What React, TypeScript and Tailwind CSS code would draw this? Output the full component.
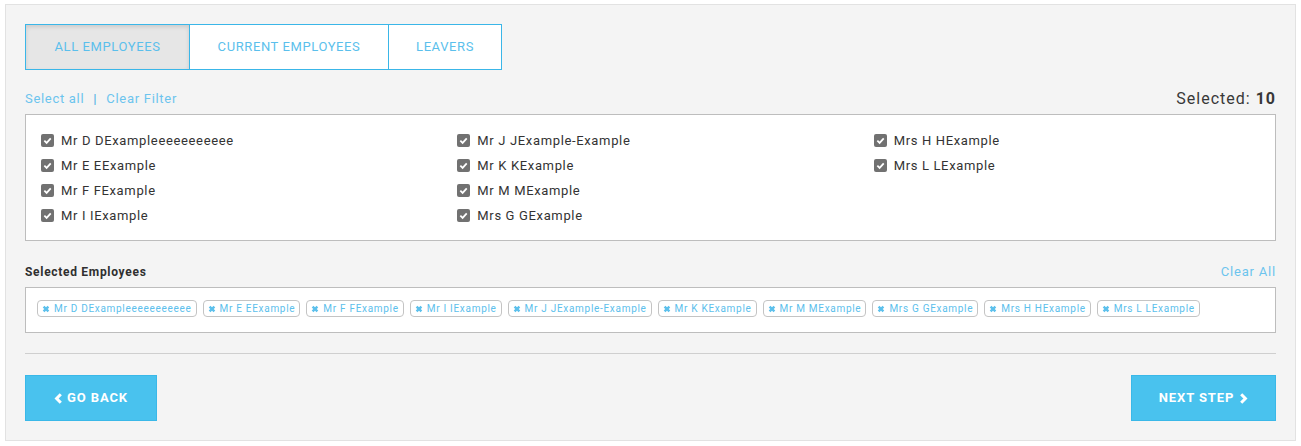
import React from 'react';

const employees = [
  ['Mr D DExampleeeeeeeeeee', 'Mr E EExample', 'Mr F FExample', 'Mr I IExample'],
  ['Mr J JExample-Example', 'Mr K KExample', 'Mr M MExample', 'Mrs G GExample'],
  ['Mrs H HExample', 'Mrs L LExample'],
];

const selected = [
  'Mr D DExampleeeeeeeeeee',
  'Mr E EExample',
  'Mr F FExample',
  'Mr I IExample',
  'Mr J JExample-Example',
  'Mr K KExample',
  'Mr M MExample',
  'Mrs G GExample',
  'Mrs H HExample',
  'Mrs L LExample',
];

function CheckBox() {
  return (
    <span className="w-[13px] h-[13px] rounded-[2px] bg-[#717171] flex items-center justify-center shrink-0">
      <svg width="9" height="9" viewBox="0 0 10 10">
        <path d="M1.5 5.2 L4 7.6 L8.6 2.6" stroke="white" strokeWidth="2" fill="none" />
      </svg>
    </span>
  );
}

function XIcon() {
  return (
    <svg width="8" height="8" viewBox="0 0 10 10" className="shrink-0">
      <path d="M2 2 L8 8 M8 2 L2 8" stroke="#5cc0ec" strokeWidth="3" />
    </svg>
  );
}

export default function App() {
  const tabs = [
    { label: 'ALL EMPLOYEES', w: 'w-[163px]', active: true },
    { label: 'CURRENT EMPLOYEES', w: 'w-[199px]', active: false },
    { label: 'LEAVERS', w: 'w-[113px]', active: false },
  ];
  return (
    <div className="w-[1301px] h-[446px] bg-white pt-[4px] pl-[5px]" style={{ fontFamily: 'Roboto, "Liberation Sans", sans-serif' }}>
      <div className="w-[1291px] h-[437px] bg-[#f4f4f4] border border-[#e2e2e2] px-[19px] pt-[19px]">
        {/* Tabs */}
        <div className="flex h-[46px] border border-[#3ab6e8] w-fit">
          {tabs.map((t, i) => (
            <div
              key={t.label}
              className={`${t.w} flex items-center justify-center text-[13px] tracking-[0.6px] text-[#5bbfec] ${i > 0 ? 'border-l border-[#3ab6e8]' : ''} ${t.active ? 'bg-[#e6e6e6] shadow-[inset_0_2px_4px_rgba(0,0,0,0.12)]' : 'bg-white'}`}
            >
              {t.label}
            </div>
          ))}
        </div>

        {/* Filter row */}
        <div className="flex items-end justify-between mt-[19px] h-[20px]">
          <div className="flex items-center text-[13px] tracking-[0.7px] text-[#6cc4ee] pb-[1px]">
            <span>Select all</span>
            <span className="mx-[9px] text-[#5bb4e4] font-bold">|</span>
            <span>Clear Filter</span>
          </div>
          <div className="text-[16px] tracking-[1px] text-[#383838] leading-[20px]">
            Selected: <span className="font-bold">10</span>
          </div>
        </div>

        {/* Checkbox list */}
        <div className="mt-[5px] h-[127px] bg-white border border-[#bdbdbd] pt-[15px] grid grid-cols-3">
          {employees.map((col, ci) => (
            <div key={ci} className="flex flex-col pl-[15px]">
              {col.map((name) => (
                <div key={name} className="flex items-center gap-[7px] h-[25px] -mt-[2px] mb-[2px]">
                  <CheckBox />
                  <span className="text-[13px] tracking-[0.65px] text-[#333]">{name}</span>
                </div>
              ))}
            </div>
          ))}
        </div>

        {/* Selected employees */}
        <div className="flex items-center justify-between mt-[22px] h-[18px]">
          <span className="text-[12px] font-bold tracking-[0.7px] text-[#2f2f2f]">Selected Employees</span>
          <span className="text-[13px] tracking-[0.8px] text-[#6cc4ee]">Clear All</span>
        </div>
        <div className="mt-[6px] h-[46px] bg-white border border-[#bdbdbd] pl-[11px] pt-[12px] flex flex-wrap items-start gap-[6px]">
          {selected.map((name) => (
            <span
              key={name}
              className="flex items-center gap-[4px] h-[17px] px-[4px] border border-[#c4c4c4] rounded-[4px] text-[10px] tracking-[0.7px] text-[#5cc0ec] leading-none"
            >
              <XIcon />
              {name}
            </span>
          ))}
        </div>

        <div className="mt-[20px] border-t border-[#cfcfcf]" />

        {/* Footer buttons */}
        <div className="flex justify-between mt-[21px]">
          <button className="w-[132px] h-[46px] bg-[#49c2ee] border border-[#3ab8e8] text-white text-[13px] font-bold tracking-[0.9px] flex items-center justify-center gap-[4px]">
            <svg width="9" height="11" viewBox="0 0 9 11">
              <path d="M6.8 1.2 L2.6 5.5 L6.8 9.8" stroke="white" strokeWidth="3" fill="none" />
            </svg>
            GO BACK
          </button>
          <button className="w-[145px] h-[46px] bg-[#49c2ee] border border-[#3ab8e8] text-white text-[13px] font-bold tracking-[0.9px] flex items-center justify-center gap-[5px]">
            NEXT STEP
            <svg width="9" height="11" viewBox="0 0 9 11">
              <path d="M2.2 1.2 L6.4 5.5 L2.2 9.8" stroke="white" strokeWidth="3" fill="none" />
            </svg>
          </button>
        </div>
      </div>
    </div>
  );
}
